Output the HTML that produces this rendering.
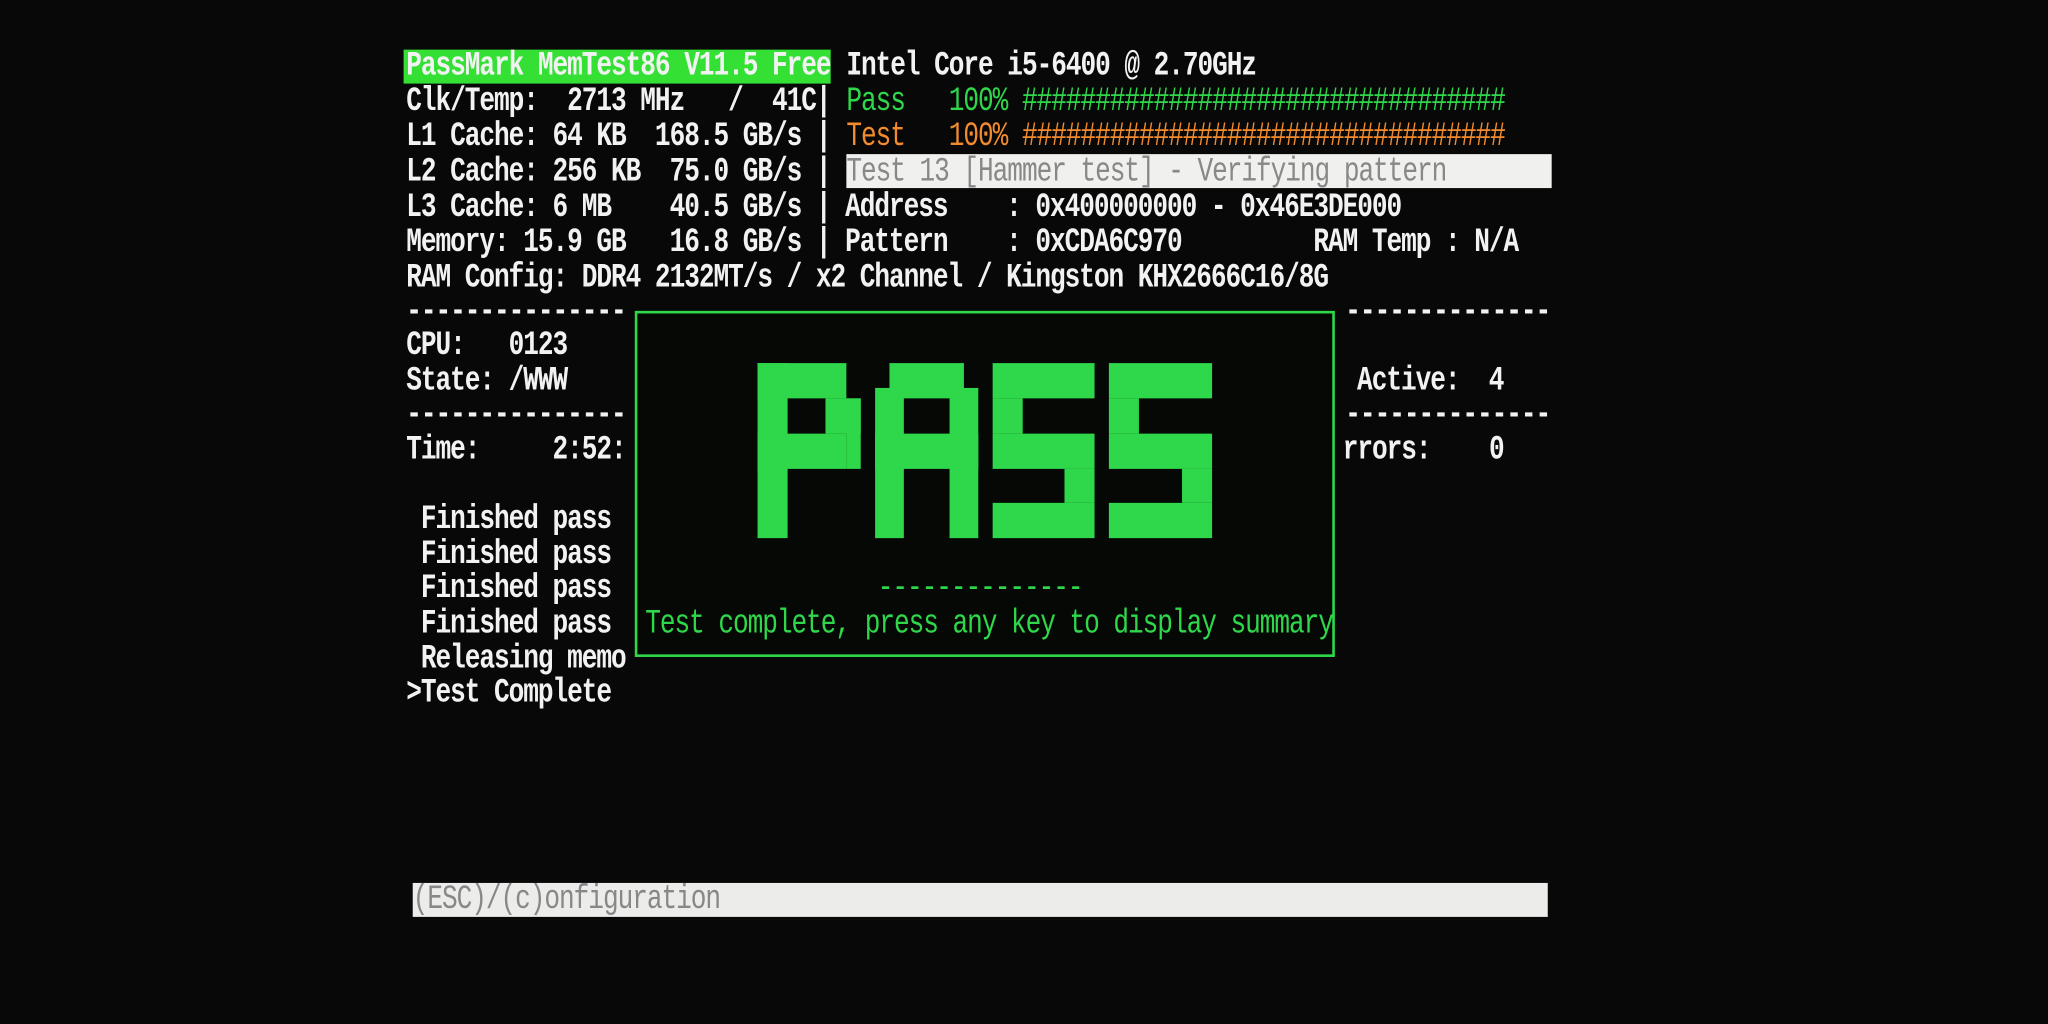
<!DOCTYPE html>
<html><head><meta charset="utf-8"><style>
html,body{margin:0;padding:0;background:#080808;width:2048px;height:1024px;overflow:hidden;position:relative}
#w{position:absolute;left:0;top:0;width:1568px;height:784px;transform:scale(1.30612);transform-origin:0 0}
.t{position:absolute;font-family:"Liberation Mono",monospace;font-size:20px;line-height:22px;letter-spacing:-0.8px;white-space:pre;color:#f2f2f2;transform:scaleY(1.3);transform-origin:0 50%;font-weight:bold}
.g{color:#2fd84a;font-weight:normal}
.o{color:#f28a2e;font-weight:normal}
.b{position:absolute;background:#2fd84a}
</style></head><body><div id="w">
<div style="position:absolute;left:309px;top:38px;width:327px;height:26px;background:#35e035"></div>
<div style="position:absolute;left:648px;top:118px;width:540px;height:26px;background:#f0f0ee"></div>
<div style="position:absolute;left:316px;top:676px;width:869px;height:26px;background:#ececea"></div>
<div style="position:absolute;left:486px;top:238px;width:532px;height:261px;border:2px solid #2fd84a;background:#050805"></div>

<div class="t" style="left:311px;top:41px">PassMark MemTest86 V11.5 Free</div>
<div class="t" style="left:648px;top:41px">Intel Core i5-6400 @ 2.70GHz</div>
<div class="t" style="left:311px;top:68px">Clk/Temp:  2713 MHz   /  41C|</div>
<div class="t g" style="left:648px;top:68px">Pass   100% #################################</div>
<div class="t" style="left:311px;top:95px">L1 Cache: 64 KB  168.5 GB/s |</div>
<div class="t o" style="left:648px;top:95px">Test   100% #################################</div>
<div class="t" style="left:311px;top:122px">L2 Cache: 256 KB  75.0 GB/s |</div>
<div class="t" style="left:648px;top:122px;color:#888;font-weight:normal">Test 13 [Hammer test] - Verifying pattern</div>
<div class="t" style="left:311px;top:149px">L3 Cache: 6 MB    40.5 GB/s | Address    : 0x400000000 - 0x46E3DE000</div>
<div class="t" style="left:311px;top:176px">Memory: 15.9 GB   16.8 GB/s | Pattern    : 0xCDA6C970         RAM Temp : N/A</div>
<div class="t" style="left:311px;top:203px">RAM Config: DDR4 2132MT/s / x2 Channel / Kingston KHX2666C16/8G</div>
<div class="t" style="left:311px;top:229px">---------------</div>
<div class="t" style="left:1030px;top:229px">--------------</div>
<div class="t" style="left:311px;top:255px">CPU:   0123</div>
<div class="t" style="left:311px;top:282px">State: /WWW</div>
<div class="t" style="left:1039px;top:282px">Active:  4</div>
<div class="t" style="left:311px;top:308px">---------------</div>
<div class="t" style="left:1030px;top:308px">--------------</div>
<div class="t" style="left:311px;top:335px">Time:     2:52:</div>
<div class="t" style="left:1028px;top:335px">rrors:    0</div>
<div class="t" style="left:311px;top:388px"> Finished pass</div>
<div class="t" style="left:311px;top:415px"> Finished pass</div>
<div class="t" style="left:311px;top:441px"> Finished pass</div>
<div class="t" style="left:311px;top:468px"> Finished pass</div>
<div class="t" style="left:311px;top:495px"> Releasing memo</div>
<div class="t" style="left:311px;top:521px">&gt;Test Complete</div>
<div class="t" style="left:316px;top:679px;color:#888;font-weight:normal">(ESC)/(c)onfiguration</div>

<div class="t g" style="left:672px;top:441px">--------------</div>
<div class="t g" style="left:494px;top:468px">Test complete, press any key to display summary</div>

<div class="b" style="left:580px;top:278px;width:68px;height:27px"></div>
<div class="b" style="left:580px;top:278px;width:23px;height:134px"></div>
<div class="b" style="left:632px;top:305px;width:27px;height:27px"></div>
<div class="b" style="left:580px;top:332px;width:68px;height:27px"></div>
<div class="b" style="left:648px;top:305px;width:11px;height:54px"></div>

<div class="b" style="left:681px;top:278px;width:57px;height:27px"></div>
<div class="b" style="left:670px;top:297px;width:22px;height:115px"></div>
<div class="b" style="left:727px;top:297px;width:22px;height:115px"></div>
<div class="b" style="left:670px;top:332px;width:79px;height:27px"></div>

<div class="b" style="left:760px;top:278px;width:78px;height:27px"></div>
<div class="b" style="left:760px;top:305px;width:23px;height:27px"></div>
<div class="b" style="left:760px;top:332px;width:78px;height:27px"></div>
<div class="b" style="left:815px;top:359px;width:23px;height:26px"></div>
<div class="b" style="left:760px;top:385px;width:78px;height:27px"></div>

<div class="b" style="left:849px;top:278px;width:79px;height:27px"></div>
<div class="b" style="left:849px;top:305px;width:23px;height:27px"></div>
<div class="b" style="left:849px;top:332px;width:79px;height:27px"></div>
<div class="b" style="left:905px;top:359px;width:23px;height:26px"></div>
<div class="b" style="left:849px;top:385px;width:79px;height:27px"></div>
</div></body></html>
